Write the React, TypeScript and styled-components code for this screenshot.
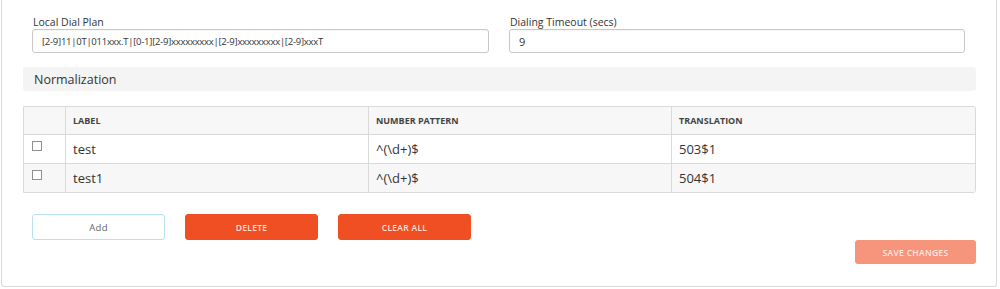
import styled, { createGlobalStyle } from "styled-components";

const GlobalStyle = createGlobalStyle`
    html, body { margin: 0; padding: 0; background: #fff; }
    body { font-family: "Open Sans", "Liberation Sans", sans-serif; color: #333; }
    * { box-sizing: border-box; }
`

const Panel = styled.div`
    margin-left: 1px; width: 996px; height: 287px;
    border: 1px solid #d9d9d9; border-top: none; border-radius: 0 0 3px 3px;
    padding: 15px 20px 0 21px;
    display: flex; flex-direction: column;
`
const FieldRow = styled.div`
    display: grid; grid-template-columns: 457px 456px; gap: 20px;
    padding: 0 9px;
`
const Field = styled.label`
    display: flex; flex-direction: column;
    span{ font-size: 10.5px; line-height: 14px; color: #333; padding-left: 1px; }
`
const Input = styled.input<{ large?: boolean }>`
    height: 24px; width: 100%; border: 1px solid #c8c8c8; border-radius: 3px;
    padding: 0 9px; font-family: inherit; color: #333; outline: none; background: #fff;
    font-size: ${({ large }) => large ? "11px" : "9.5px"};
    letter-spacing: ${({ large }) => large ? "0" : "-0.25px"};
    box-shadow: inset 0 1px 1px rgba(0,0,0,0.04);
`
const SectionBar = styled.div`
    margin-top: 14px; height: 24px; border-radius: 3px; background: #f4f4f4;
    display: flex; align-items: center; padding-left: 11px;
    font-size: 12.5px; color: #333;
`
const Table = styled.table`
    margin-top: 15px; width: 953px; border-collapse: separate; border-spacing: 0;
    table-layout: fixed;
    border: 1px solid #dadada; border-radius: 0 3px 3px 0; overflow: hidden;
    th, td { border-left: 1px solid #dadada; text-align: left; padding: 0 7px; }
    th:first-child, td:first-child { border-left: none; }
    td { border-top: 1px solid #dadada; height: 29px; font-size: 13px; color: #333; }
`
const HeadRow = styled.tr`
    background: #f7f7f7;
    th{ height: 27px; font-size: 9px; font-weight: 700; color: #444; }
`
const BodyRow = styled.tr<{ striped: boolean }>`
    background: ${({ striped }) => striped ? "#f7f7f7" : "#fff"};
`
const Col = styled.col<{ w?: number }>`
    width: ${({ w }) => w ? `${w}px` : "auto"};
`
const Check = styled.span`
    display: block; width: 10px; height: 10px; margin: -6px 0 0 1px;
    border: 1px solid #8f8f8f; background: #fff;
`
const ButtonRow = styled.div`
    margin-top: 21px; padding-left: 9px; display: flex; gap: 20px;
`
const Button = styled.button<{ variant: "outline" | "danger" }>`
    width: 133px; height: 26px; border-radius: 3px; cursor: pointer;
    font-family: inherit; font-size: 8.5px; letter-spacing: 0.3px;
    ${({ variant }) => variant === "outline"
        ? `background: #fff; border: 1px solid #b8e2f2; color: #666; font-size: 9.5px;`
        : `background: #f04e23; border: 1px solid #f04e23; color: #fde3db; font-weight: 600;`}
`
const Footer = styled.div`
    display: flex; justify-content: flex-end;
`
const SaveButton = styled.button`
    width: 121px; height: 24px; border-radius: 3px; border: none;
    background: #f6957b; color: #fde8e1; font-family: inherit;
    font-size: 8.5px; font-weight: 600; letter-spacing: 0.3px;
`

const rules = [
    { label: "test", pattern: "^(\\d+)$", translation: "503$1" },
    { label: "test1", pattern: "^(\\d+)$", translation: "504$1" },
]

function App(){
    return(
        <>
            <GlobalStyle/>
            <Panel>
                <FieldRow>
                    <Field>
                        <span>Local Dial Plan</span>
                        <Input readOnly value="[2-9]11|0T|011xxx.T|[0-1][2-9]xxxxxxxxx|[2-9]xxxxxxxxx|[2-9]xxxT"/>
                    </Field>
                    <Field>
                        <span>Dialing Timeout (secs)</span>
                        <Input readOnly large value="9"/>
                    </Field>
                </FieldRow>

                <SectionBar>Normalization</SectionBar>

                <Table>
                    <colgroup>
                        <Col w={41}/>
                        <Col w={303}/>
                        <Col w={303}/>
                        <Col/>
                    </colgroup>
                    <thead>
                        <HeadRow>
                            <th></th>
                            <th>LABEL</th>
                            <th>NUMBER PATTERN</th>
                            <th>TRANSLATION</th>
                        </HeadRow>
                    </thead>
                    <tbody>
                        { rules.map((r, k) => (
                            <BodyRow key={k} striped={k % 2 == 1}>
                                <td><Check/></td>
                                <td>{r.label}</td>
                                <td>{r.pattern}</td>
                                <td>{r.translation}</td>
                            </BodyRow>
                        )) }
                    </tbody>
                </Table>

                <ButtonRow>
                    <Button variant="outline">Add</Button>
                    <Button variant="danger">DELETE</Button>
                    <Button variant="danger">CLEAR ALL</Button>
                </ButtonRow>

                <Footer>
                    <SaveButton>SAVE CHANGES</SaveButton>
                </Footer>
            </Panel>
        </>
    )
}
export default App;
